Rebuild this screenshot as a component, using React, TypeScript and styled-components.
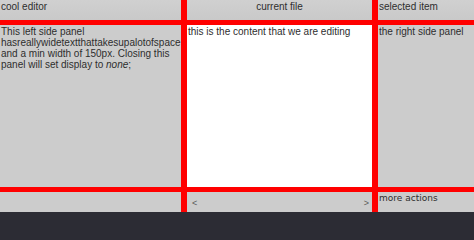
import React from "react";
import styled, { createGlobalStyle } from "styled-components";

const Global = createGlobalStyle`
  html, body { margin: 0; padding: 0; background: #2c2c34; }
  body { font-family: "Liberation Sans", Arial, sans-serif; }
`;

const Layout = styled.div`
  display: grid;
  grid-template-columns: 181px 185px 1fr;
  grid-template-rows: 20px 162px 20px;
  column-gap: 6px;
  row-gap: 5px;
  height: 212px;
  background: #ff0000;
  font-size: 10px;
  line-height: 11px;
  color: #2e2e2e;
`;

const Cell = styled.div<{ $center?: boolean; $white?: boolean }>`
  background: ${(p) => (p.$white ? "#ffffff" : "#cccccc")};
  text-align: ${(p) => (p.$center ? "center" : "left")};
  padding: 1px 1px 0 1px;
  min-width: 0;
  box-sizing: border-box;
`;

const HeaderCell = styled(Cell)`
  background: linear-gradient(#d0d0d0, #c9c9c9);
`;

const PanelText = styled.div`
  white-space: normal;
  overflow: visible;
`;

const FooterScroll = styled(Cell)`
  display: flex;
  align-items: center;
  justify-content: space-between;
  padding: 0 3px 0 5px;
`;

const Arrow = styled.span`
  font-size: 9px;
  color: #5a5a5a;
  line-height: 1;
  margin-top: 3px;
`;

const FooterText = styled(Cell)`
  font-family: "DejaVu Sans", "Liberation Sans", sans-serif;
  font-size: 9px;
  padding-top: 1px;
`;

export default function App() {
  return (
    <>
      <Global />
      <Layout>
        <HeaderCell>cool editor</HeaderCell>
        <HeaderCell $center>current file</HeaderCell>
        <HeaderCell>selected item</HeaderCell>

        <Cell>
          <PanelText>
            This left side panel
            <br />
            hasreallywidetextthattakesupalotofspace and a min width of 150px. Closing this
            panel will set display to <i>none</i>;
          </PanelText>
        </Cell>
        <Cell $white>this is the content that we are editing</Cell>
        <Cell>the right side panel</Cell>

        <Cell />
        <FooterScroll>
          <Arrow>&lt;</Arrow>
          <Arrow>&gt;</Arrow>
        </FooterScroll>
        <FooterText>more actions</FooterText>
      </Layout>
    </>
  );
}
